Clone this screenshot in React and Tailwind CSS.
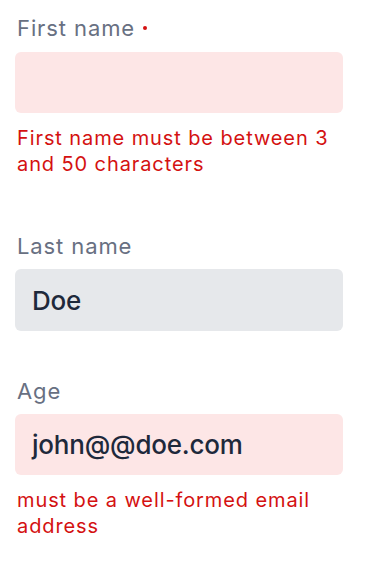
export default function App() {
  const font = { fontFamily: 'Inter, "Noto Sans", sans-serif' };
  return (
    <div className="w-[368px] h-[561px] bg-white" style={font}>
      <div className="w-[328px] ml-[15px] pt-[14px] flex flex-col">
        <div className="flex items-center pl-[2px] text-[22px] leading-[28px] tracking-[0.9px] text-[#687082]">
          <span>First name</span>
          <span className="ml-[8px] w-[4px] h-[4px] rounded-full bg-[#d41111]"></span>
        </div>
        <div className="mt-[10px] h-[61px] rounded-[6px] bg-[#fde6e6]"></div>
        <div className="mt-[12px] pl-[2px] text-[20px] leading-[26px] tracking-[0.9px] text-[#d41111]">
          First name must be between 3 and 50 characters
        </div>

        <div className="mt-[55px] pl-[2px] text-[22px] leading-[28px] tracking-[0.9px] text-[#687082]">Last name</div>
        <div className="mt-[9px] h-[62px] rounded-[6px] bg-[#e6e8eb] flex items-center px-[17px] text-[26px] font-medium tracking-[-0.2px] text-[#1e293b]">
          Doe
        </div>

        <div className="mt-[46px] pl-[2px] text-[22px] leading-[28px] tracking-[0.9px] text-[#687082]">Age</div>
        <div className="mt-[9px] h-[61px] rounded-[6px] bg-[#fde6e6] flex items-center px-[17px] text-[26px] font-medium tracking-[-0.2px] text-[#1e293b]">
          john@@doe.com
        </div>
        <div className="mt-[12px] pl-[2px] text-[20px] leading-[26px] tracking-[0.9px] text-[#d41111]">
          must be a well-formed email address
        </div>
      </div>
    </div>
  );
}
